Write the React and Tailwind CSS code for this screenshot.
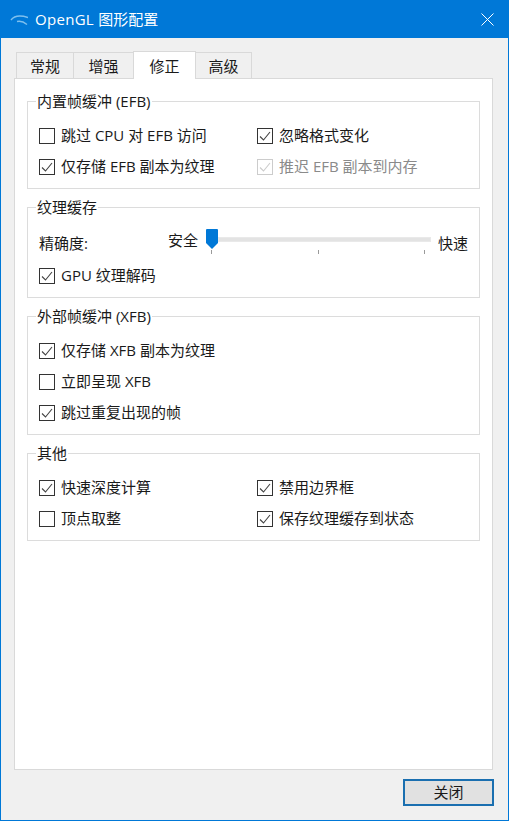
import React from 'react';

const FONT = "font-['Open_Sans','Noto_Sans_CJK_SC',sans-serif]";

const CheckBox = ({ checked, disabled }) => (
  <span
    className={`block size-[16px] shrink-0 border bg-white ${
      disabled ? 'border-[#cccccc]' : 'border-[#333333]'
    }`}
  >
    {checked && (
      <svg width="14" height="14" viewBox="0 0 14 14" fill="none">
        <path
          d="M2 7.5L5.5 11L12 3"
          stroke={disabled ? '#cccccc' : '#444444'}
          strokeWidth="1.1"
        />
      </svg>
    )}
  </span>
);

const Option = ({ label, checked, disabled }) => (
  <div className="flex items-center gap-[6px] h-[31px]">
    <CheckBox checked={checked} disabled={disabled} />
    <span className={disabled ? 'text-[#8a8a8a]' : 'text-[#1a1a1a]'}>{label}</span>
  </div>
);

const Group = ({ title, children }) => (
  <div className="relative border border-[#dcdcdc] pt-[18px] pb-[6px] px-[11px]">
    <span className="absolute -top-[11px] left-[8px] bg-white px-[1px] leading-[20px] text-[#1a1a1a]">
      {title}
    </span>
    {children}
  </div>
);

const Tab = ({ label, active, className }) => (
  <div
    className={`flex items-center justify-center pt-[2px] border border-b-0 border-[#d9d9d9] text-[#1a1a1a] ${className} ${
      active ? 'h-[28px] bg-white -mb-px relative z-10' : 'h-[26px] bg-[#f0f0f0]'
    }`}
  >
    {label}
  </div>
);

const Slider = () => (
  <div className="relative w-[233px] h-[32px] shrink-0">
    <div className="absolute left-[13px] right-[7px] top-[11px] h-[5px] bg-[#e3e3e3] border border-[#e9e9e9]" />
    <svg className="absolute left-[1px] top-[3px]" width="12" height="20" viewBox="0 0 12 20">
      <path d="M1 0H11Q12 0 12 1V14L6 20L0 14V1Q0 0 1 0Z" fill="#0078d7" />
    </svg>
    <div className="absolute left-[6px] top-[24px] w-px h-[4px] bg-[#9a9a9a]" />
    <div className="absolute left-[113px] top-[24px] w-px h-[4px] bg-[#9a9a9a]" />
    <div className="absolute left-[219px] top-[24px] w-px h-[4px] bg-[#9a9a9a]" />
  </div>
);

export default function App() {
  return (
    <div className={`${FONT} flex flex-col w-[509px] h-[821px] border border-[#0078d7] bg-[#f0f0f0] text-[15px] overflow-hidden`}>
      {/* Title bar */}
      <div className="flex items-center h-[37px] shrink-0 bg-[#0078d7] text-white">
        <svg className="ml-[9px]" width="18" height="12" viewBox="0 0 18 12" fill="none">
          <path d="M1 6C4 2 10 1 18 3.5" stroke="#7fc0ee" strokeWidth="1.4" />
          <path d="M7 7.5C11 6.5 14 8 17 10.5" stroke="#7fc0ee" strokeWidth="1.4" />
        </svg>
        <span className="ml-[7px] text-[15px]">
          <span className="tracking-[0.3px]">OpenGL </span>图形配置
        </span>
        <svg className="ml-auto mr-[14px]" width="13" height="13" viewBox="0 0 13 13" fill="none">
          <path d="M0.5 0.5L12.5 12.5M12.5 0.5L0.5 12.5" stroke="white" strokeWidth="1" />
        </svg>
      </div>

      <div className="flex flex-col flex-1 px-[13px] pt-[12px] pb-[14px]">
        {/* Tabs */}
        <div className="flex items-end pl-[2px] h-[28px] shrink-0">
          <Tab label="常规" className="w-[58px]" />
          <Tab label="增强" className="w-[61px] -ml-px" />
          <Tab label="修正" active className="w-[63px] -ml-px" />
          <Tab label="高级" className="w-[57px] -ml-px" />
        </div>

        {/* Tab pane */}
        <div className="flex-1 flex flex-col gap-[18px] bg-white border border-[#d9d9d9] pt-[22px] px-[12px] w-[479px]">
          <Group title="内置帧缓冲 (EFB)">
            <div className="grid grid-cols-[218px_1fr]">
              <Option label="跳过 CPU 对 EFB 访问" />
              <Option label="忽略格式变化" checked />
              <Option label="仅存储 EFB 副本为纹理" checked />
              <Option label="推迟 EFB 副本到内存" checked disabled />
            </div>
          </Group>

          <Group title="纹理缓存">
            <div className="flex h-[34px] text-[#1a1a1a]">
              <span className="w-[129px] pt-[6px] leading-[22px]">精确度:</span>
              <span className="w-[37px] pt-[3px] leading-[22px]">安全</span>
              <Slider />
              <span className="pt-[6px] leading-[22px] whitespace-nowrap">快速</span>
            </div>
            <Option label="GPU 纹理解码" checked />
          </Group>

          <Group title="外部帧缓冲 (XFB)">
            <Option label="仅存储 XFB 副本为纹理" checked />
            <Option label="立即呈现 XFB" />
            <Option label="跳过重复出现的帧" checked />
          </Group>

          <Group title="其他">
            <div className="grid grid-cols-[218px_1fr]">
              <Option label="快速深度计算" checked />
              <Option label="禁用边界框" checked />
              <Option label="顶点取整" />
              <Option label="保存纹理缓存到状态" checked />
            </div>
          </Group>
        </div>

        {/* Footer */}
        <div className="flex justify-end pt-[9px] shrink-0">
          <button className="w-[91px] h-[27px] mr-[1px] border-2 border-[#1a6fb0] bg-[#e1e1e1] text-[#1a1a1a] text-[15px]">
            关闭
          </button>
        </div>
      </div>
    </div>
  );
}
